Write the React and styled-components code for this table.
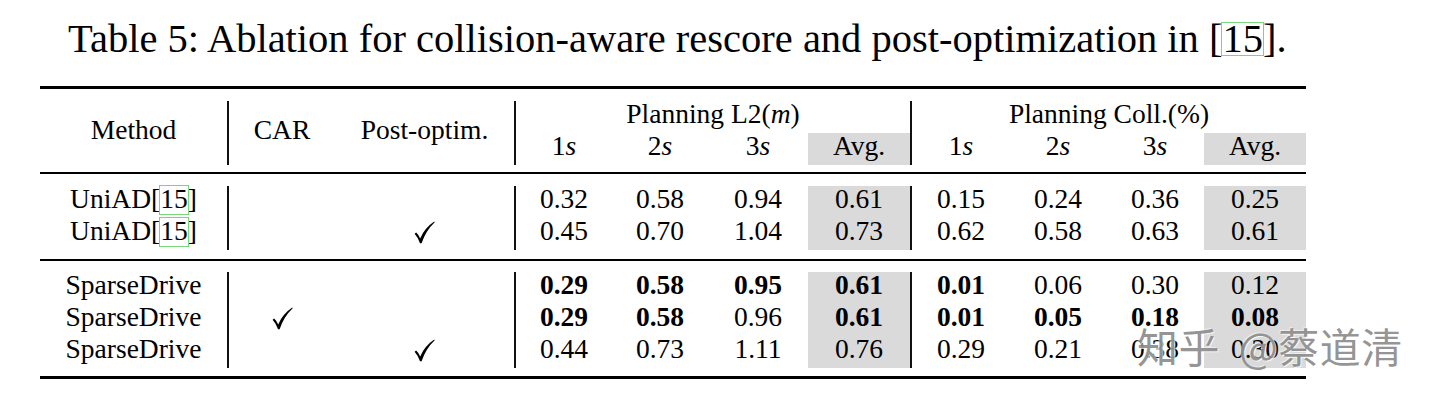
import React from "react";
import styled, { createGlobalStyle } from "styled-components";

const Global = createGlobalStyle`
  html, body { margin: 0; padding: 0; background: #fff; }
  #root { width: 1440px; height: 409px; }
`;

const COLS = "187px 108px 179px 98px 96px 100px 102px 100px 96px 98px 102px";

const Page = styled.div`
  position: relative;
  width: 1440px;
  height: 409px;
  box-sizing: border-box;
  padding: 15px 0 0 40px;
  background: #fff;
  color: #000;
  font-family: "Liberation Serif", "Times New Roman", serif;
  overflow: hidden;
`;

const Caption = styled.div`
  margin-left: 28px;
  font-size: 40.5px;
  line-height: 48px;
  white-space: nowrap;
`;

const Cite = styled.span`
  position: relative;
  &::after {
    content: "";
    position: absolute;
    left: -1px;
    right: -1px;
    top: ${(p) => p.$top}px;
    bottom: ${(p) => p.$bottom}px;
    border: 1px solid rgb(120, 215, 120);
  }
`;

const Table = styled.div`
  margin-top: 23px;
  width: 1266px;
  border-top: 3px solid #000;
  border-bottom: 3px solid #000;
`;

const Section = styled.div`
  display: grid;
  grid-template-columns: ${COLS};
  grid-auto-rows: 32px;
  padding: ${(p) => p.$pt}px 0 ${(p) => p.$pb}px;
  border-bottom: ${(p) => (p.$rule ? "2px solid #000" : "none")};
`;

const Cell = styled.div`
  box-sizing: border-box;
  height: 32px;
  font-size: 27.5px;
  line-height: 26px;
  text-align: center;
  white-space: nowrap;
  font-weight: ${(p) => (p.$bold ? 700 : 400)};
  background: ${(p) => (p.$shade ? "#dadada" : "transparent")};
  border-left: ${(p) => (p.$line ? "2px solid #111" : "none")};
`;

const SpanCell = styled(Cell)`
  height: auto;
  grid-row: span ${(p) => p.$rows || 1};
  grid-column: span ${(p) => p.$cols || 1};
  display: flex;
  align-items: ${(p) => (p.$rows > 1 ? "center" : "flex-start")};
  justify-content: center;
  padding-bottom: ${(p) => (p.$rows > 1 ? 7 : 0)}px;
`;

const CheckCell = styled(Cell)`
  display: flex;
  align-items: center;
  justify-content: center;
  padding-bottom: 3px;
`;

const Watermark = styled.div`
  position: absolute;
  left: 1137px;
  top: 324px;
  font-family: "Noto Sans CJK SC", "Noto Sans", sans-serif;
  font-size: 41px;
  line-height: 42px;
  letter-spacing: 0.5px;
  white-space: nowrap;
  color: rgba(130, 130, 130, 0.85);
  text-shadow: 1px 1px 0 rgba(255, 255, 255, 0.75), -1px -1px 0 rgba(255, 255, 255, 0.5);
  pointer-events: none;
`;

const Gap = styled.span`
  display: inline-block;
  width: 19px;
`;

const Check = () => (
  <svg width="21" height="23" viewBox="0 0 21 23">
    <path
      d="M0.6 12.8 L2.2 11.6 Q4.3 13.6 6.2 17.4 Q10.5 7.2 20.2 0.6 L20.7 1.3 Q12 9.5 7.6 22.2 L6 22.2 Q3.6 16 0.6 12.8 Z"
      fill="#000"
    />
  </svg>
);

const Ref = () => (
  <>
    [<Cite $top={2} $bottom={-1}>15</Cite>]
  </>
);

const rows1 = [
  { name: "UniAD", cite: true, car: false, post: false, v: ["0.32", "0.58", "0.94", "0.61", "0.15", "0.24", "0.36", "0.25"], b: [] },
  { name: "UniAD", cite: true, car: false, post: true, v: ["0.45", "0.70", "1.04", "0.73", "0.62", "0.58", "0.63", "0.61"], b: [] },
];

const rows2 = [
  { name: "SparseDrive", car: false, post: false, v: ["0.29", "0.58", "0.95", "0.61", "0.01", "0.06", "0.30", "0.12"], b: [0, 1, 2, 3, 4] },
  { name: "SparseDrive", car: true, post: false, v: ["0.29", "0.58", "0.96", "0.61", "0.01", "0.05", "0.18", "0.08"], b: [0, 1, 3, 4, 5, 6, 7] },
  { name: "SparseDrive", car: false, post: true, v: ["0.44", "0.73", "1.11", "0.76", "0.29", "0.21", "0.38", "0.30"], b: [] },
];

const Row = ({ r }) => (
  <>
    <Cell>
      {r.name}
      {r.cite && <Ref />}
    </Cell>
    <CheckCell $line>{r.car && <Check />}</CheckCell>
    <CheckCell>{r.post && <Check />}</CheckCell>
    {r.v.map((val, i) => (
      <Cell key={i} $line={i === 0 || i === 4} $shade={i === 3 || i === 7} $bold={r.b.includes(i)}>
        {val}
      </Cell>
    ))}
  </>
);

const Sub = ({ n }) => (
  <>
    {n}
    <i>s</i>
  </>
);

export default function App() {
  return (
    <Page>
      <Global />
      <Caption>
        Table 5: Ablation for collision-aware rescore and post-optimization in [
        <Cite $top={6} $bottom={5}>15</Cite>].
      </Caption>
      <Table>
        <Section $pt={12} $pb={7} $rule>
          <SpanCell $rows={2}>Method</SpanCell>
          <SpanCell $rows={2} $line>CAR</SpanCell>
          <SpanCell $rows={2}>Post-optim.</SpanCell>
          <SpanCell $cols={4} $line>
            Planning L2(<i>m</i>)
          </SpanCell>
          <SpanCell $cols={4} $line>
            Planning Coll.(%)
          </SpanCell>
          <Cell $line><Sub n="1" /></Cell>
          <Cell><Sub n="2" /></Cell>
          <Cell><Sub n="3" /></Cell>
          <Cell $shade>Avg.</Cell>
          <Cell $line><Sub n="1" /></Cell>
          <Cell><Sub n="2" /></Cell>
          <Cell><Sub n="3" /></Cell>
          <Cell $shade>Avg.</Cell>
        </Section>
        <Section $pt={12} $pb={9} $rule>
          {rows1.map((r, i) => (
            <Row key={i} r={r} />
          ))}
        </Section>
        <Section $pt={11} $pb={8}>
          {rows2.map((r, i) => (
            <Row key={i} r={r} />
          ))}
        </Section>
      </Table>
      <Watermark>
        知乎<Gap />@蔡道清
      </Watermark>
    </Page>
  );
}
